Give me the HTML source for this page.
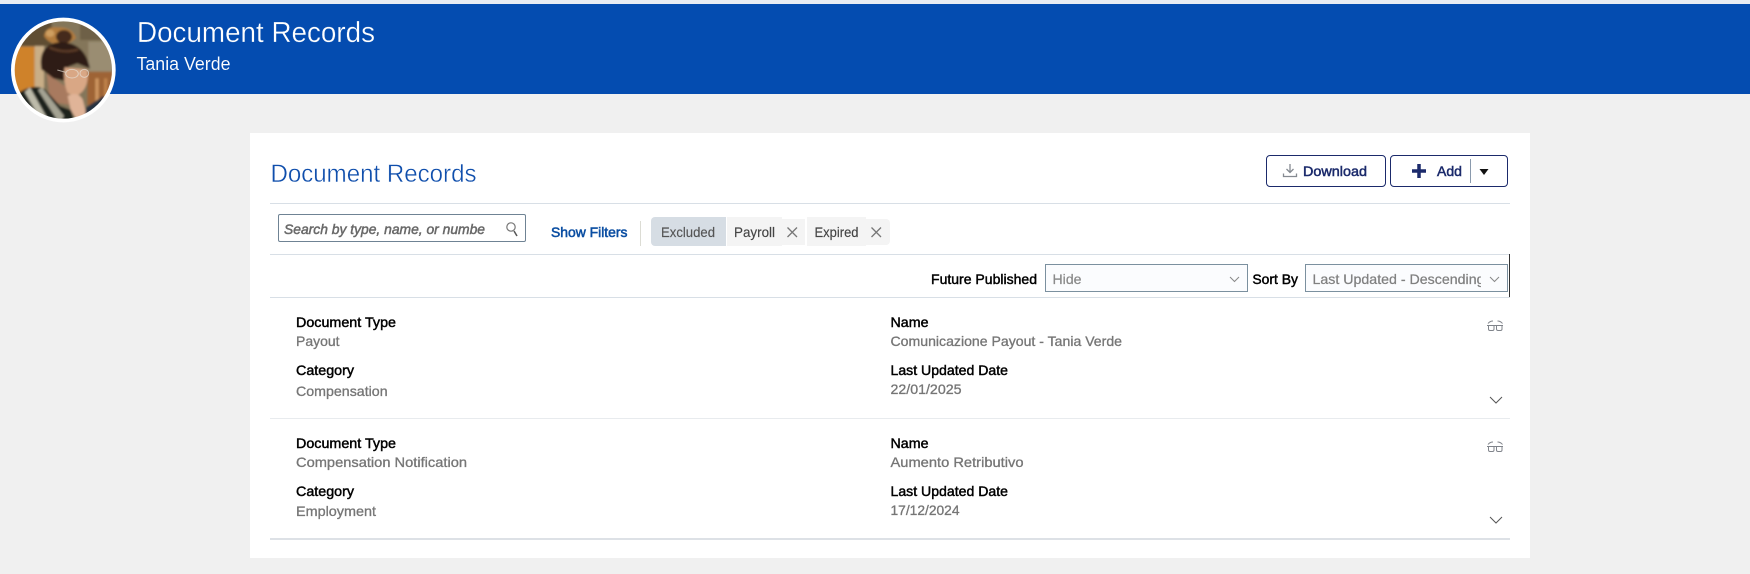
<!DOCTYPE html>
<html lang="en"><head><meta charset="utf-8"><title>Document Records</title>
<style>
html,body{margin:0;padding:0;width:1750px;height:574px;overflow:hidden;background:#f0f0f0}
.a{position:absolute;box-sizing:border-box}
svg text{font-family:"Liberation Sans",Arial,sans-serif;font-size:14px}
.l{fill:#000;stroke:#000;stroke-width:.45}
.v{fill:#767676;stroke:#767676;stroke-width:.32}
</style></head><body>
<div class="a" style="left:0;top:0;width:1750px;height:4px;background:#e8ecf3"></div>
<div class="a" style="left:0;top:4px;width:1750px;height:90px;background:#044cb0"></div>
<div class="a" style="left:250px;top:133px;width:1280px;height:425px;background:#fff"></div>
<div class="a" style="left:270px;top:203px;width:1240px;height:1px;background:#d8dfe6"></div>
<div class="a" style="left:270px;top:254px;width:1240px;height:1px;background:#d8dfe6"></div>
<div class="a" style="left:270px;top:297px;width:1240px;height:1px;background:#d8dfe6"></div>
<div class="a" style="left:270px;top:418px;width:1240px;height:1px;background:#e8ebee"></div>
<div class="a" style="left:270px;top:538px;width:1240px;height:2px;background:#dde1e6"></div>
<div class="a" style="left:1509px;top:254px;width:1px;height:43px;background:#333"></div>
<div class="a" style="left:1266px;top:155px;width:120px;height:32px;border:1px solid #1b2a6b;border-radius:4px"></div>
<div class="a" style="left:1390px;top:155px;width:118px;height:32px;border:1px solid #1b2a6b;border-radius:4px"></div>
<div class="a" style="left:1470px;top:159px;width:1px;height:24px;background:#8a9aad"></div>
<div class="a" style="left:278px;top:214px;width:248px;height:28px;border:1px solid #6f8394;border-radius:2px"></div>
<div class="a" style="left:640px;top:221px;width:1px;height:25px;background:#dcdcd4"></div>
<div class="a" style="left:651px;top:217px;width:75px;height:29px;background:#d6dde4;border-radius:4px 0 0 4px"></div>
<div class="a" style="left:727px;top:217px;width:55px;height:29px;background:#f4f4f4"></div>
<div class="a" style="left:782px;top:219px;width:23px;height:26px;background:#f4f4f4"></div>
<div class="a" style="left:807px;top:217px;width:59px;height:29px;background:#f4f4f4"></div>
<div class="a" style="left:866px;top:219px;width:24px;height:26px;background:#f4f4f4;border-radius:0 4px 4px 0"></div>
<div class="a" style="left:1045px;top:264px;width:203px;height:28px;background:#fbfcfe;border:1px solid #7b909f"></div>
<div class="a" style="left:1305px;top:264px;width:203px;height:28px;background:#fbfcfe;border:1px solid #7b909f"></div>

<svg class="a" style="left:0;top:10px" width="130" height="120" viewBox="0 0 390 360">
<defs><clipPath id="c"><circle cx="190" cy="180" r="146"/></clipPath><filter id="b" x="-5%" y="-5%" width="110%" height="110%"><feGaussianBlur stdDeviation="3.500"/></filter></defs>
<circle cx="190" cy="180" r="157" fill="#fff"/>
<g clip-path="url(#c)"><g filter="url(#b)">
<rect x="30" y="20" width="320" height="320" fill="#84765a"/>
<rect x="30" y="20" width="125" height="88" fill="#5f4d30"/>
<rect x="240" y="30" width="110" height="60" fill="#6e6047"/>
<rect x="265" y="95" width="80" height="90" fill="#9a8d72"/>
<rect x="30" y="110" width="74" height="135" fill="#cf822c"/>
<rect x="104" y="108" width="28" height="130" fill="#c9ae87"/>
<rect x="262" y="185" width="80" height="100" fill="#9e6436"/>
<rect x="286" y="205" width="10" height="70" fill="#cd9660"/>
<rect x="312" y="205" width="10" height="60" fill="#bf824a"/>
<path d="M132 78 Q138 48 175 52 Q218 52 228 84 Q205 106 180 100 Q150 106 132 78Z" fill="#b27b3e"/>
<ellipse cx="192" cy="80" rx="24" ry="20" fill="#452a1a"/>
<ellipse cx="150" cy="70" rx="13" ry="11" fill="#cf9f60"/>
<path d="M140 190 L205 235 L210 285 L150 275Z" fill="#a87a5e"/>
<path d="M124 178 Q112 100 185 96 Q256 100 270 176 L232 160 L206 170 L192 212 L160 205 Q142 190 124 178Z" fill="#2f1c12"/>
<path d="M148 112 Q190 132 235 118" fill="none" stroke="#5b3b26" stroke-width="7"/>
<path d="M194 172 L262 178 Q268 222 246 246 L226 262 L202 248 Q188 212 194 172Z" fill="#d9a785"/>
<path d="M203 258 Q232 242 248 268 L260 315 L235 335 L212 300Z" fill="#e0b498"/>
<path d="M50 252 Q100 218 135 238 L180 288 L213 300 L225 340 L36 340Z" fill="#1f231b"/>
<path d="M90 232 L150 340 L128 340 L74 246Z" fill="#bdbbaa"/>
<path d="M126 232 L192 318 L178 340 L114 240Z" fill="#a4a393"/>
<path d="M60 258 L93 340 L76 340 L50 268Z" fill="#7e7f72"/>
<path d="M258 292 L310 258 L345 272 L345 340 L252 340Z" fill="#27303f"/>
</g>
<g fill="none" stroke="#e5ded4" stroke-width="3" opacity=".7"><ellipse cx="216" cy="191" rx="19" ry="13"/><ellipse cx="253" cy="190" rx="13" ry="12"/><path d="M172 180 L198 187"/></g></g>
</svg>

<svg class="a" style="left:0;top:0" width="1750" height="574">
<defs><clipPath id="s1"><rect x="1306" y="265" width="175" height="26"/></clipPath><clipPath id="s2"><rect x="280" y="216" width="206" height="24"/></clipPath></defs>
<text x="137" y="42" style="font-size:29px" fill="#fff" stroke="#044cb0" stroke-width=".3" textLength="238" lengthAdjust="spacingAndGlyphs">Document Records</text>
<text x="136.500" y="70" style="font-size:18.500px" fill="#fff" stroke="#044cb0" stroke-width=".1" textLength="94" lengthAdjust="spacingAndGlyphs">Tania Verde</text>
<text x="270.500" y="182" style="font-size:25px" fill="#0f4eac" stroke="#fff" stroke-width=".4" textLength="206" lengthAdjust="spacingAndGlyphs">Document Records</text>

<path d="M1290 164v8M1286.500 169l3.500 3.500 3.500-3.500M1283.500 173.500v3h13v-3" fill="none" stroke="#858a91" stroke-width="1.300"/>
<text x="1303" y="176" fill="#1b2a6b" stroke="#1b2a6b" stroke-width=".5" textLength="64" lengthAdjust="spacingAndGlyphs">Download</text>
<path d="M1412 171h14M1419 164v14" stroke="#1b2a6b" stroke-width="3.500" fill="none"/>
<text x="1437" y="176" fill="#1b2a6b" stroke="#1b2a6b" stroke-width=".5" textLength="25" lengthAdjust="spacingAndGlyphs">Add</text>
<path d="M1479.500 169h9l-4.500 6z" fill="#111"/>

<g clip-path="url(#s2)"><text x="284" y="234" font-style="italic" fill="#696969" stroke="#696969" stroke-width=".5" textLength="201" lengthAdjust="spacingAndGlyphs">Search by type, name, or numbe</text></g>
<circle cx="511" cy="227" r="4.200" fill="none" stroke="#777" stroke-width="1.200"/><path d="M514 231l3 5" stroke="#555" stroke-width="1.500"/>
<text x="551" y="237" fill="#0b4ea2" stroke="#0b4ea2" stroke-width=".55" textLength="76.500" lengthAdjust="spacingAndGlyphs">Show Filters</text>
<text x="661" y="237" fill="#555" stroke="#555" stroke-width=".15" textLength="54" lengthAdjust="spacingAndGlyphs">Excluded</text>
<text x="734" y="237" fill="#444" stroke="#444" stroke-width=".15" textLength="41" lengthAdjust="spacingAndGlyphs">Payroll</text>
<path d="M787.500 227.500l9.500 9.500M797 227.500l-9.500 9.500" stroke="#777" stroke-width="1.300"/>
<text x="814.500" y="237" fill="#444" stroke="#444" stroke-width=".15" textLength="44" lengthAdjust="spacingAndGlyphs">Expired</text>
<path d="M871.500 227.500l9.500 9.500M881 227.500l-9.500 9.500" stroke="#777" stroke-width="1.300"/>

<text x="931" y="284" class="l" textLength="106" lengthAdjust="spacingAndGlyphs">Future Published</text>
<text x="1052.500" y="284" fill="#8a8a8a" stroke="#8a8a8a" stroke-width=".25" textLength="29" lengthAdjust="spacingAndGlyphs">Hide</text>
<path d="M1230 277l4.500 4.500 4.500-4.500" fill="none" stroke="#888" stroke-width="1"/>
<text x="1252.400" y="284" class="l" textLength="45.600" lengthAdjust="spacingAndGlyphs">Sort By</text>
<g clip-path="url(#s1)"><text x="1312.500" y="284" fill="#808080" stroke="#808080" stroke-width=".25" textLength="172" lengthAdjust="spacingAndGlyphs">Last Updated - Descending</text></g>
<path d="M1490 277l4.500 4.500 4.500-4.500" fill="none" stroke="#888" stroke-width="1"/>

<text x="296" y="327" class="l" textLength="100" lengthAdjust="spacingAndGlyphs">Document Type</text>
<text x="296" y="346" class="v" textLength="43.500" lengthAdjust="spacingAndGlyphs">Payout</text>
<text x="296" y="375" class="l" textLength="58" lengthAdjust="spacingAndGlyphs">Category</text>
<text x="296" y="396" class="v" textLength="91.600" lengthAdjust="spacingAndGlyphs">Compensation</text>
<text x="890.500" y="327" class="l" textLength="38" lengthAdjust="spacingAndGlyphs">Name</text>
<text x="890.500" y="346" class="v" textLength="231.500" lengthAdjust="spacingAndGlyphs">Comunicazione Payout - Tania Verde</text>
<text x="890.500" y="375" class="l" textLength="117.500" lengthAdjust="spacingAndGlyphs">Last Updated Date</text>
<text x="890.500" y="394" class="v" textLength="71" lengthAdjust="spacingAndGlyphs">22/01/2025</text>

<text x="296" y="448" class="l" textLength="100" lengthAdjust="spacingAndGlyphs">Document Type</text>
<text x="296" y="467" class="v" textLength="171" lengthAdjust="spacingAndGlyphs">Compensation Notification</text>
<text x="296" y="496" class="l" textLength="58" lengthAdjust="spacingAndGlyphs">Category</text>
<text x="296" y="516" class="v" textLength="80" lengthAdjust="spacingAndGlyphs">Employment</text>
<text x="890.500" y="448" class="l" textLength="38" lengthAdjust="spacingAndGlyphs">Name</text>
<text x="890.500" y="467" class="v" textLength="133" lengthAdjust="spacingAndGlyphs">Aumento Retributivo</text>
<text x="890.500" y="496" class="l" textLength="117.500" lengthAdjust="spacingAndGlyphs">Last Updated Date</text>
<text x="890.500" y="515" class="v" textLength="69" lengthAdjust="spacingAndGlyphs">17/12/2024</text>

<g fill="none" stroke="#80848b" stroke-width="1">
<path d="M1487 325.500h16M1488.500 325.500v3.500q0 1.500 1.500 1.500h2.500q1.500 0 1.500-1.500v-3.500M1496.500 325.500v3.500q0 1.500 1.500 1.500h2.500q1.500 0 1.500-1.500v-3.500M1488 323.500q2-2.500 5-2.500M1497.500 321q3 0 5 2.500"/>
<path transform="translate(0 121)" d="M1487 325.500h16M1488.500 325.500v3.500q0 1.500 1.500 1.500h2.500q1.500 0 1.500-1.500v-3.500M1496.500 325.500v3.500q0 1.500 1.500 1.500h2.500q1.500 0 1.500-1.500v-3.500M1488 323.500q2-2.500 5-2.500M1497.500 321q3 0 5 2.500"/>
</g>
<path d="M1490 397l6 6 6-6M1490 517l6 6 6-6" fill="none" stroke="#555" stroke-width="1"/>
</svg>
</body></html>
